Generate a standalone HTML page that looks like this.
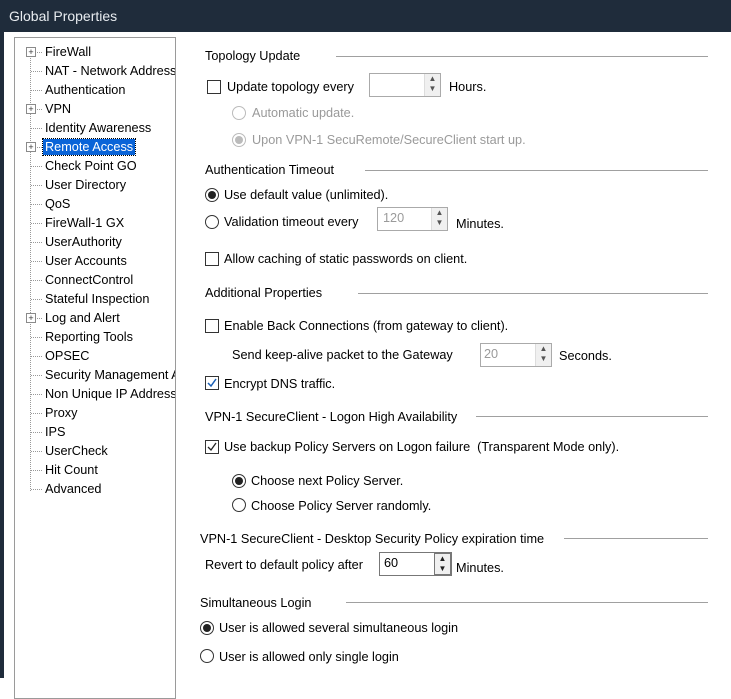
<!DOCTYPE html>
<html><head><style>
body{margin:0;width:731px;height:678px;overflow:hidden;background:#fff;font-family:"Liberation Sans",Arial,sans-serif;font-size:12.7px;color:#000;position:relative}
.tb{position:absolute;left:0;top:0;width:731px;height:32px;background:#1f2c3b;color:#e8ecf0;font-size:14px}
.tb span{position:absolute;left:9px;top:8px}
.ls{position:absolute;left:0;top:32px;width:4px;height:646px;background:#1f2c3b}
.tree{position:absolute;left:14px;top:37px;width:160px;height:660px;border:1px solid #9a9a9a;background:#fff;overflow:hidden}
.ti{position:absolute;left:30px;white-space:nowrap;height:16px;line-height:16px}
.sel{background:#0a64d8;color:#fff;outline:1px dotted #000;padding:0 2px;left:28px}
.pl{position:absolute;left:11px;width:8px;height:8px;border:1px solid #8a8a8a;background:#fff;font-size:9px;line-height:8px;text-align:center;color:#333}
.a{position:absolute;white-space:nowrap}
.g{color:#9a9a9a}
.hr{position:absolute;height:1px;background:#a0a0a0}
.cb{position:absolute;width:12px;height:12px;border:1px solid #333;background:#fff}
.rb{position:absolute;width:12px;height:12px;border:1px solid #333;border-radius:50%;background:#fff}
.rb.on::after{content:"";position:absolute;left:2px;top:2px;width:8px;height:8px;border-radius:50%;background:#222}
.rb.dis{border-color:#bbb}.rb.dis.on::after{background:#bbb}
.sp{position:absolute;height:22px;border:1px solid #aaa;background:#fff}
.sp .b{position:absolute;right:0;top:0;width:15px;height:22px;border-left:1px solid #ddd;background:#f0f0f0;font-size:8px;color:#555;text-align:center;line-height:10px}
</style></head><body>
<div class="tb"><span>Global Properties</span></div>
<div class="ls"></div>
<div class="tree">
<svg style="position:absolute;left:0;top:0" width="40" height="470"><line x1="15.5" y1="14" x2="15.5" y2="453" stroke="#999" stroke-dasharray="1,1"/>
<g stroke="#999" stroke-dasharray="1,1">
<line x1="16" y1="14.5" x2="28" y2="14.5"/><line x1="16" y1="33.5" x2="28" y2="33.5"/><line x1="16" y1="52.5" x2="28" y2="52.5"/><line x1="16" y1="71.5" x2="28" y2="71.5"/><line x1="16" y1="90.5" x2="28" y2="90.5"/><line x1="16" y1="109.5" x2="28" y2="109.5"/><line x1="16" y1="128.5" x2="28" y2="128.5"/><line x1="16" y1="147.5" x2="28" y2="147.5"/><line x1="16" y1="166.5" x2="28" y2="166.5"/><line x1="16" y1="185.5" x2="28" y2="185.5"/><line x1="16" y1="204.5" x2="28" y2="204.5"/><line x1="16" y1="223.5" x2="28" y2="223.5"/><line x1="16" y1="242.5" x2="28" y2="242.5"/><line x1="16" y1="261.5" x2="28" y2="261.5"/><line x1="16" y1="280.5" x2="28" y2="280.5"/><line x1="16" y1="299.5" x2="28" y2="299.5"/><line x1="16" y1="318.5" x2="28" y2="318.5"/><line x1="16" y1="337.5" x2="28" y2="337.5"/><line x1="16" y1="356.5" x2="28" y2="356.5"/><line x1="16" y1="375.5" x2="28" y2="375.5"/><line x1="16" y1="394.5" x2="28" y2="394.5"/><line x1="16" y1="413.5" x2="28" y2="413.5"/><line x1="16" y1="432.5" x2="28" y2="432.5"/><line x1="16" y1="451.5" x2="28" y2="451.5"/></g></svg>
<div class="pl" style="top:9px">+</div><div class="pl" style="top:66px">+</div><div class="pl" style="top:104px">+</div><div class="pl" style="top:275px">+</div>
<div class="ti" style="top:6px">FireWall</div>
<div class="ti" style="top:25px">NAT - Network Address Translation</div>
<div class="ti" style="top:44px">Authentication</div>
<div class="ti" style="top:63px">VPN</div>
<div class="ti" style="top:82px">Identity Awareness</div>
<div class="ti sel" style="top:101px">Remote Access</div>
<div class="ti" style="top:120px">Check Point GO</div>
<div class="ti" style="top:139px">User Directory</div>
<div class="ti" style="top:158px">QoS</div>
<div class="ti" style="top:177px">FireWall-1 GX</div>
<div class="ti" style="top:196px">UserAuthority</div>
<div class="ti" style="top:215px">User Accounts</div>
<div class="ti" style="top:234px">ConnectControl</div>
<div class="ti" style="top:253px">Stateful Inspection</div>
<div class="ti" style="top:272px">Log and Alert</div>
<div class="ti" style="top:291px">Reporting Tools</div>
<div class="ti" style="top:310px">OPSEC</div>
<div class="ti" style="top:329px">Security Management Access</div>
<div class="ti" style="top:348px">Non Unique IP Address Ranges</div>
<div class="ti" style="top:367px">Proxy</div>
<div class="ti" style="top:386px">IPS</div>
<div class="ti" style="top:405px">UserCheck</div>
<div class="ti" style="top:424px">Hit Count</div>
<div class="ti" style="top:443px">Advanced</div>
</div>

<div class="a" style="left:205px;top:49px">Topology Update</div><div class="hr" style="left:336px;top:56px;width:372px"></div>
<div class="cb" style="left:207px;top:80px"></div><div class="a" style="left:227px;top:80px">Update topology every</div>
<div class="sp" style="left:369px;top:73px;width:70px"><div class="b">▲<br>▼</div></div><div class="a" style="left:449px;top:80px">Hours.</div>
<div class="rb dis" style="left:232px;top:106px"></div><div class="a g" style="left:252px;top:106px">Automatic update.</div>
<div class="rb dis on" style="left:232px;top:133px"></div><div class="a g" style="left:252px;top:133px">Upon VPN-1 SecuRemote/SecureClient start up.</div>
<div class="a" style="left:205px;top:163px">Authentication Timeout</div><div class="hr" style="left:365px;top:170px;width:343px"></div>
<div class="rb on" style="left:205px;top:188px"></div><div class="a" style="left:224px;top:188px">Use default value (unlimited).</div>
<div class="rb" style="left:205px;top:215px"></div><div class="a" style="left:224px;top:215px">Validation timeout every</div>
<div class="sp" style="left:377px;top:207px;width:69px"><span class="g" style="position:absolute;left:5px;top:3px">120</span><div class="b">▲<br>▼</div></div><div class="a" style="left:456px;top:217px">Minutes.</div>
<div class="cb" style="left:205px;top:252px"></div><div class="a" style="left:224px;top:252px">Allow caching of static passwords on client.</div>
<div class="a" style="left:205px;top:286px">Additional Properties</div><div class="hr" style="left:358px;top:293px;width:350px"></div>
<div class="cb" style="left:205px;top:319px"></div><div class="a" style="left:224px;top:319px">Enable Back Connections (from gateway to client).</div>
<div class="a" style="left:232px;top:348px">Send keep-alive packet to the Gateway</div>
<div class="sp" style="left:480px;top:343px;width:70px"><span class="g" style="position:absolute;left:3px;top:3px">20</span><div class="b">▲<br>▼</div></div><div class="a" style="left:559px;top:349px">Seconds.</div>
<div class="cb" style="left:205px;top:376px;border-color:#333"><svg width="12" height="12" style="position:absolute;left:0;top:0"><path d="M2 6 L5 9 L10 2" fill="none" stroke="#1a5fb4" stroke-width="1.5"/></svg></div><div class="a" style="left:224px;top:377px">Encrypt DNS traffic.</div>
<div class="a" style="left:205px;top:410px">VPN-1 SecureClient - Logon High Availability</div><div class="hr" style="left:476px;top:416px;width:232px"></div>
<div class="cb" style="left:205px;top:440px"><svg width="12" height="12" style="position:absolute;left:0;top:0"><path d="M2 6 L5 9 L10 2" fill="none" stroke="#222" stroke-width="1.3"/></svg></div><div class="a" style="left:224px;top:440px">Use backup Policy Servers on Logon failure&nbsp; (Transparent Mode only).</div>
<div class="rb on" style="left:232px;top:474px"></div><div class="a" style="left:251px;top:474px">Choose next Policy Server.</div>
<div class="rb" style="left:232px;top:498px"></div><div class="a" style="left:251px;top:499px">Choose Policy Server randomly.</div>
<div class="a" style="left:200px;top:532px">VPN-1 SecureClient - Desktop Security Policy expiration time</div><div class="hr" style="left:564px;top:538px;width:144px"></div>
<div class="a" style="left:205px;top:558px">Revert to default policy after</div>
<div class="sp" style="left:379px;top:552px;width:71px;border-color:#777"><span style="position:absolute;left:4px;top:3px">60</span><div class="b" style="border:1px solid #777;height:20px;color:#222">▲<br>▼</div></div><div class="a" style="left:456px;top:561px">Minutes.</div>
<div class="a" style="left:200px;top:596px">Simultaneous Login</div><div class="hr" style="left:346px;top:602px;width:362px"></div>
<div class="rb on" style="left:200px;top:621px"></div><div class="a" style="left:219px;top:621px">User is allowed several simultaneous login</div>
<div class="rb" style="left:200px;top:649px"></div><div class="a" style="left:219px;top:650px">User is allowed only single login</div>
</body></html>
